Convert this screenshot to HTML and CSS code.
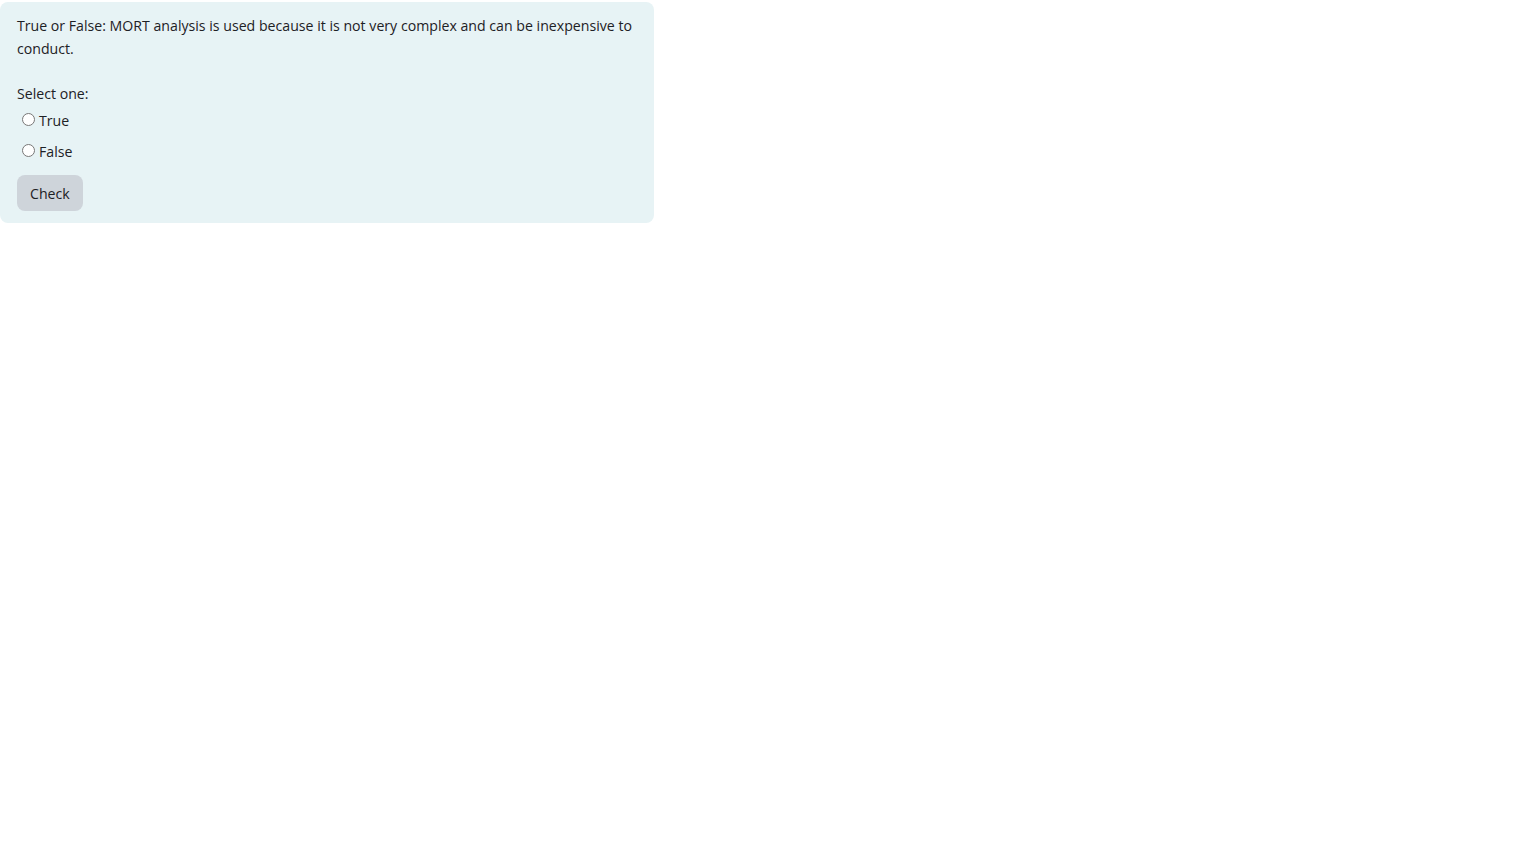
FILE: index.html
```html
<!DOCTYPE html>
<html lang="en">
<head>
<meta charset="utf-8">
<title>Question</title>
<link rel="stylesheet" href="styles.css">
</head>
<body>
<div class="que">
  <div class="qtext">True or False: MORT analysis is used because it is not very complex and can be inexpensive to conduct.</div>
  <div class="prompt">Select one:</div>
  <div class="answer">
    <label class="opt"><input type="radio" name="q1" value="1"><span>True</span></label>
    <label class="opt"><input type="radio" name="q1" value="0"><span>False</span></label>
  </div>
  <button class="check" type="button">Check</button>
</div>
</body>
</html>
```
FILE: styles.css
```css
html, body {
  margin: 0;
  padding: 0;
  background: #ffffff;
}
body {
  font-family: "Segoe UI", "Open Sans", "Noto Sans", sans-serif;
  font-size: 14.15px;
  line-height: 22.5px;
  color: #1d2125;
}
.que {
  width: 654px;
  box-sizing: border-box;
  margin-top: 2px;
  background: #e7f3f5;
  border-radius: 8px;
  padding: 13px 16px 12px 17px;
}
.qtext {
  margin-bottom: 23px;
}
.answer {
  display: flex;
  flex-direction: column;
}
.opt {
  display: flex;
  align-items: center;
  padding: 4px 0 4.5px 0;
}
.opt input {
  width: 13px;
  height: 13px;
  margin: -3px 4px 0 5px;
}
.check {
  margin-top: 7px;
  font-family: inherit;
  font-size: 14.15px;
  line-height: 22.5px;
  color: #1d2125;
  background: #ced4da;
  border: 0;
  border-radius: 8px;
  padding: 8px 13px 5.5px;
}
```
